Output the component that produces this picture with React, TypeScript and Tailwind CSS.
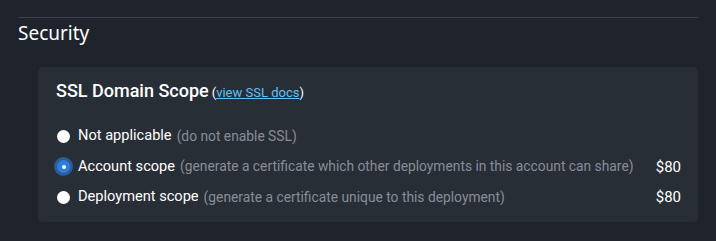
import React from "react";

function Radio({ checked }: { checked?: boolean }) {
  if (checked) {
    return (
      <span className="w-[13px] h-[13px] rounded-full bg-[#2f7de1] flex items-center justify-center shrink-0 ring-[3px] ring-[#2f6fc0]/70">
        <span className="w-[4px] h-[4px] rounded-full bg-white" />
      </span>
    );
  }
  return <span className="w-[13px] h-[13px] rounded-full bg-white shrink-0" />;
}

function Row({ label, desc, price, checked }: { label: string; desc: string; price?: string; checked?: boolean }) {
  return (
    <div className="flex items-center h-[30.5px]">
      <div className="w-[22px] flex justify-start pl-[1px]">
        <Radio checked={checked} />
      </div>
      <span className="text-[14.6px] text-white">{label}</span>
      <span className="text-[13.8px] text-[#878d96] ml-[5px]">{desc}</span>
      <span className="flex-1" />
      {price && <span className="text-[15px] text-white mr-[17px]">{price}</span>}
    </div>
  );
}

export default function App() {
  return (
    <div className="w-[716px] h-[241px] bg-[#1e232c] pt-[17px] pl-[18px] pr-[18px]" style={{ fontFamily: "Roboto, 'Liberation Sans', sans-serif" }}>
      <div className="border-t border-[#3a414b]" />
      <div className="text-[19px] text-white leading-[24px] mt-[3px]" style={{ fontFamily: "'Noto Sans', 'Open Sans', sans-serif" }}>Security</div>
      <div className="ml-[20px] mt-[22px] bg-[#282e36] rounded-[5px] h-[155px] pl-[18px] pt-[10px]">
        <div className="flex items-baseline">
          <span className="text-[18px] font-medium text-white">SSL Domain Scope</span>
          <span className="text-[13px] text-white ml-[3px]">(<span className="text-[#5fc1f7] underline">view SSL docs</span>)</span>
        </div>
        <div className="mt-[17px]">
          <Row label="Not applicable" desc="(do not enable SSL)" />
          <Row label="Account scope" desc="(generate a certificate which other deployments in this account can share)" price="$80" checked />
          <Row label="Deployment scope" desc="(generate a certificate unique to this deployment)" price="$80" />
        </div>
      </div>
    </div>
  );
}
